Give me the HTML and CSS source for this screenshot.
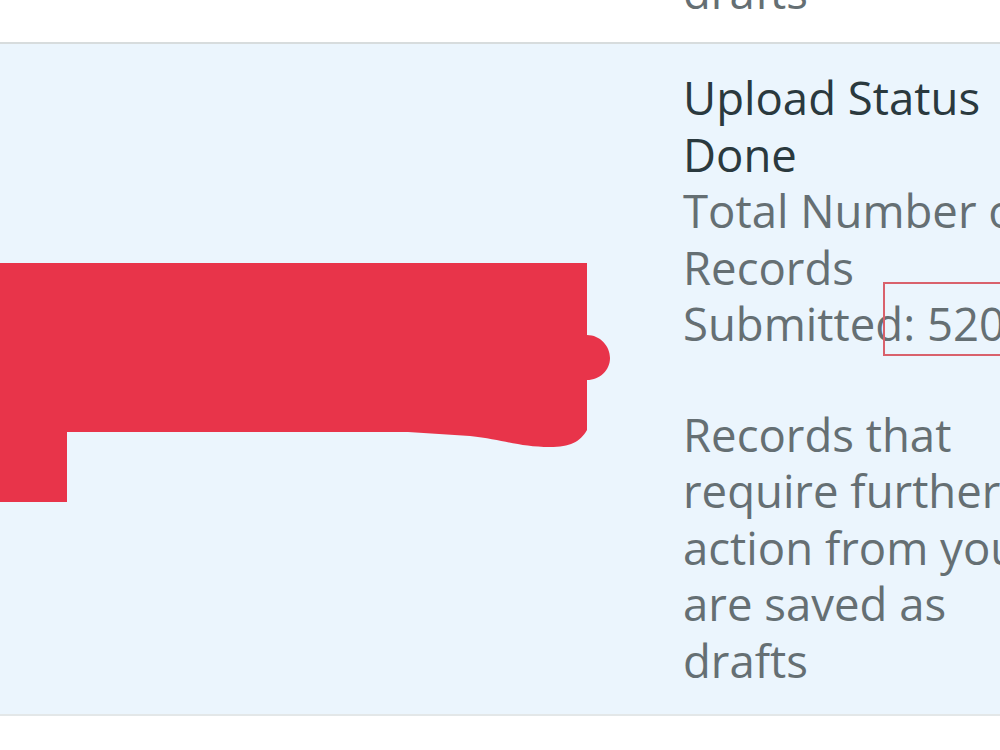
FILE: index.html
```html
<!DOCTYPE html>
<html>
<head>
<meta charset="utf-8">
<link rel="stylesheet" href="styles.css">
</head>
<body>
<div class="page">
  <div class="row row-top">
    <div class="cell-left"></div>
    <div class="cell-right"><p class="muted top-text">drafts</p></div>
  </div>
  <div class="row row-main">
    <div class="cell-left">
      <svg class="redact" width="620" height="245" viewBox="0 0 620 245">
        <path d="M0 1 H587 V73 C600 73 610 84 610 96 C610 108 600 118 587 118 V168 C580 180 570 185 550 185 C520 185 505 178 470 174 L408 170 H67 V240 H0 Z" fill="#e8344a"/>
      </svg>
    </div>
    <div class="cell-right">
      <p class="status">Upload Status<br>Done</p>
      <p class="muted">Total Number of Records Submitte<span class="mark">d: 520</span></p>
      <p class="muted note">Records that require further action from you are saved as drafts</p>
    </div>
  </div>
  <div class="row row-bottom"></div>
</div>
</body>
</html>
```

FILE: styles.css
```css
html, body {
  margin: 0;
  padding: 0;
  background: #ffffff;
}
body {
  width: 1000px;
  height: 750px;
  overflow: hidden;
  font-family: "Open Sans", "DejaVu Sans", sans-serif;
}
.page {
  display: flex;
  flex-direction: column;
  width: 1000px;
}
.row {
  display: flex;
}
.cell-left {
  width: 683px;
  flex: none;
}
.cell-right {
  width: 374px;
  flex: none;
}
p {
  margin: 0;
  font-size: 45.5px;
  line-height: 56.5px;
}
.row-top {
  height: 42px;
  overflow: hidden;
  border-bottom: 2px solid #d7dcdd;
}
.top-text {
  margin-top: -37px;
}
.row-main {
  background: #ebf5fd;
  height: 670px;
  border-bottom: 2px solid #e3e7e8;
}
.row-main .cell-left {
  padding-top: 218px;
}
.redact {
  display: block;
}
.row-main .cell-right {
  padding-top: 25px;
}
.status {
  color: #2a393e;
}
.muted {
  color: #656f73;
}
.note {
  margin-top: 54px;
}
.mark {
  position: relative;
}
.mark::after {
  content: "";
  position: absolute;
  left: 8px;
  top: -10px;
  width: 220px;
  height: 74px;
  border: 2px solid #d9616c;
  box-sizing: border-box;
}
```
